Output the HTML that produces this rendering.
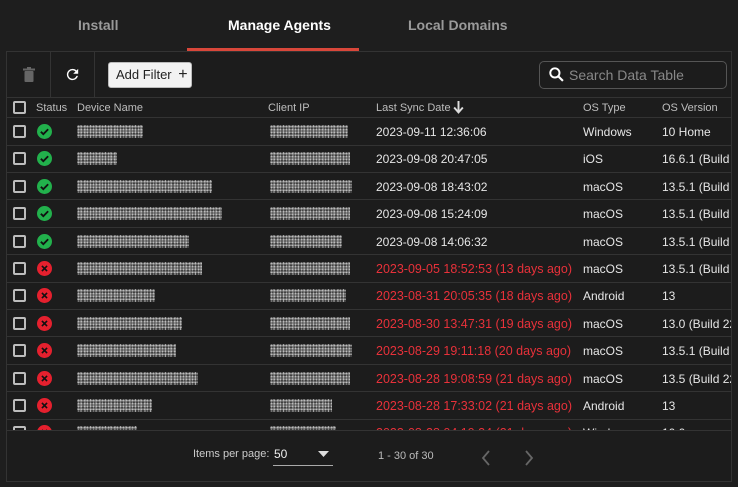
<!DOCTYPE html>
<html><head><meta charset="utf-8"><style>
*{box-sizing:border-box;margin:0;padding:0}
body{width:738px;height:487px;background:#1e1e1e;font-family:"Liberation Sans",sans-serif;color:#e6e6e6;position:relative;overflow:hidden}
.tab{position:absolute;top:17px;font-size:14px;font-weight:bold;color:#9a9a9a}
.panel{position:absolute;left:6px;top:51px;width:726px;height:431px;border:1px solid #333;background:#1c1c1c}
.abs{position:absolute}
.hline{position:absolute;left:0;width:100%;height:1px;background:#333}
.cb{position:absolute;left:6px;width:13px;height:13px;border:2px solid #bdbdbd;border-radius:2px}
.blob{position:absolute;height:13px;background-image:radial-gradient(#d8d8d8 0.8px,transparent 1.2px),radial-gradient(#9a9a9a 0.7px,transparent 1.1px),radial-gradient(#777 0.6px,transparent 1px);background-size:3px 3px,5px 2px,2px 4px;background-position:0 0,1px 1px,2px 0;opacity:.85}
.cell{position:absolute;font-size:12px;white-space:nowrap}
.red{color:#e8313a;font-size:12.5px}
.hd{position:absolute;top:50px;font-size:11px;color:#bdbdbd}
</style></head><body>
<div class="tab" style="left:78px">Install</div>
<div class="tab" style="left:228px;color:#fff">Manage Agents</div>
<div class="tab" style="left:408px">Local Domains</div>
<div class="abs" style="left:187px;top:48px;width:172px;height:3px;background:#d9473a"></div>
<div class="panel">
 <div class="abs" style="left:43px;top:0;width:1px;height:45px;background:#333"></div>
 <div class="abs" style="left:87px;top:0;width:1px;height:45px;background:#333"></div>
 <svg class="abs" style="left:16px;top:15px" width="12" height="15" viewBox="0 0 12 15"><rect x="0" y="1.5" width="12" height="2" fill="#666"/><rect x="4" y="0" width="4" height="2" fill="#666"/><rect x="1.5" y="4" width="9" height="11" rx="1" fill="#666"/></svg>
 <svg class="abs" style="left:57px;top:14px" width="17" height="17" viewBox="0 0 24 24"><path d="M17.65 6.35A7.96 7.96 0 0 0 12 4a8 8 0 1 0 7.74 10h-2.08A6 6 0 1 1 12 6c1.66 0 3.14.69 4.22 1.78L13 11h7V4l-2.35 2.35z" fill="#fff"/></svg>
 <div class="abs" style="left:101px;top:10px;width:84px;height:26px;background:#f2f2f2;border-radius:3px;border:1px solid #bbb;color:#222;font-size:13px;line-height:24px;padding-left:7px">Add Filter <span style="font-size:16px;margin-left:3px">+</span></div>
 <div class="abs" style="left:532px;top:9px;width:188px;height:28px;border:1px solid #555;border-radius:5px"></div>
 <svg class="abs" style="left:542px;top:15px" width="15" height="15" viewBox="0 0 14 14"><circle cx="5.5" cy="5.5" r="4.3" stroke="#fff" stroke-width="1.8" fill="none"/><path d="M8.6 8.6L13 13" stroke="#fff" stroke-width="2"/></svg>
 <div class="abs" style="left:562px;top:15px;font-size:14px;color:#888">Search Data Table</div>
 <div class="hline" style="top:45px"></div>
 <div class="cb" style="top:49px"></div>
 <div class="hd" style="left:29px">Status</div>
 <div class="hd" style="left:70px">Device Name</div>
 <div class="hd" style="left:261px">Client IP</div>
 <div class="hd" style="left:369px">Last Sync Date</div>
 <svg class="abs" style="left:446px;top:49px" width="11" height="13" viewBox="0 0 10 12"><path d="M5 0v10M1 6l4 4.5 4-4.5" stroke="#ddd" stroke-width="1.8" fill="none"/></svg>
 <div class="hd" style="left:576px">OS Type</div>
 <div class="hd" style="left:655px">OS Version</div>
 <div class="hline" style="top:65px"></div>
 <div class="abs" style="left:0;top:66px;width:724px;height:312px;overflow:hidden" id="rows">
 </div>
 <div class="hline" style="top:378px"></div>
 <div class="abs" style="left:186px;top:396px;font-size:11px;color:#ccc">Items per page:</div>
 <div class="abs" style="left:267px;top:395px;font-size:12px;color:#eee">50</div>
 <svg class="abs" style="left:311px;top:399px" width="11" height="6"><path d="M0 0h11L5.5 6z" fill="#ddd"/></svg>
 <div class="abs" style="left:266px;top:413px;width:60px;height:1px;background:#aaa"></div>
 <div class="abs" style="left:371px;top:398px;font-size:11px;color:#bbb">1 - 30 of 30</div>
 <svg class="abs" style="left:474px;top:398px" width="10" height="16"><path d="M8 1L2 8l6 7" stroke="#666" stroke-width="1.8" fill="none"/></svg>
 <svg class="abs" style="left:517px;top:398px" width="10" height="16"><path d="M2 1l6 7-6 7" stroke="#666" stroke-width="1.8" fill="none"/></svg>
</div>
<script>
var d=[[66,78,"2023-09-11 12:36:06","Windows","10 Home",1],[40,80,"2023-09-08 20:47:05","iOS","16.6.1 (Build 2",1],[135,82,"2023-09-08 18:43:02","macOS","13.5.1 (Build 2",1],[145,80,"2023-09-08 15:24:09","macOS","13.5.1 (Build 2",1],[112,72,"2023-09-08 14:06:32","macOS","13.5.1 (Build 2",1],
[125,80,"2023-09-05 18:52:53 (13 days ago)","macOS","13.5.1 (Build 2",0],[78,76,"2023-08-31 20:05:35 (18 days ago)","Android","13",0],[105,80,"2023-08-30 13:47:31 (19 days ago)","macOS","13.0 (Build 22",0],[99,82,"2023-08-29 19:11:18 (20 days ago)","macOS","13.5.1 (Build 2",0],[121,80,"2023-08-28 19:08:59 (21 days ago)","macOS","13.5 (Build 22",0],[75,62,"2023-08-28 17:33:02 (21 days ago)","Android","13",0],[60,66,"2023-08-28 04:19:24 (21 days ago)","Windows","10.0",0]];
var h="";d.forEach(function(r,i){var t=i*27.4;
h+='<div class="cb" style="top:'+(t+7)+'px;left:6px"></div>';
h+='<svg class="abs" style="left:30px;top:'+(t+6)+'px" width="15" height="15" viewBox="0 0 14 14"><circle cx="7" cy="7" r="7" fill="'+(r[5]?'#22b14c':'#e5202e')+'"/>'+(r[5]?'<path d="M3.6 7.2l2.3 2.3 4.5-4.6" stroke="#111" stroke-width="1.7" fill="none"/>':'<path d="M4.6 4.6l4.8 4.8M9.4 4.6l-4.8 4.8" stroke="#111" stroke-width="1.5"/>')+'</svg>';
h+='<div class="blob" style="left:70px;top:'+(t+7)+'px;width:'+r[0]+'px"></div>';
h+='<div class="blob" style="left:263px;top:'+(t+7)+'px;width:'+r[1]+'px"></div>';
h+='<div class="cell'+(r[5]?'':' red')+'" style="left:369px;top:'+(t+7)+'px">'+r[2]+'</div>';
h+='<div class="cell" style="left:576px;top:'+(t+7)+'px">'+r[3]+'</div>';
h+='<div class="cell" style="left:655px;top:'+(t+7)+'px">'+r[4]+'</div>';
h+='<div class="hline" style="top:'+(t+26.5)+'px"></div>';});
document.getElementById("rows").innerHTML=h;
</script>
</body></html>
